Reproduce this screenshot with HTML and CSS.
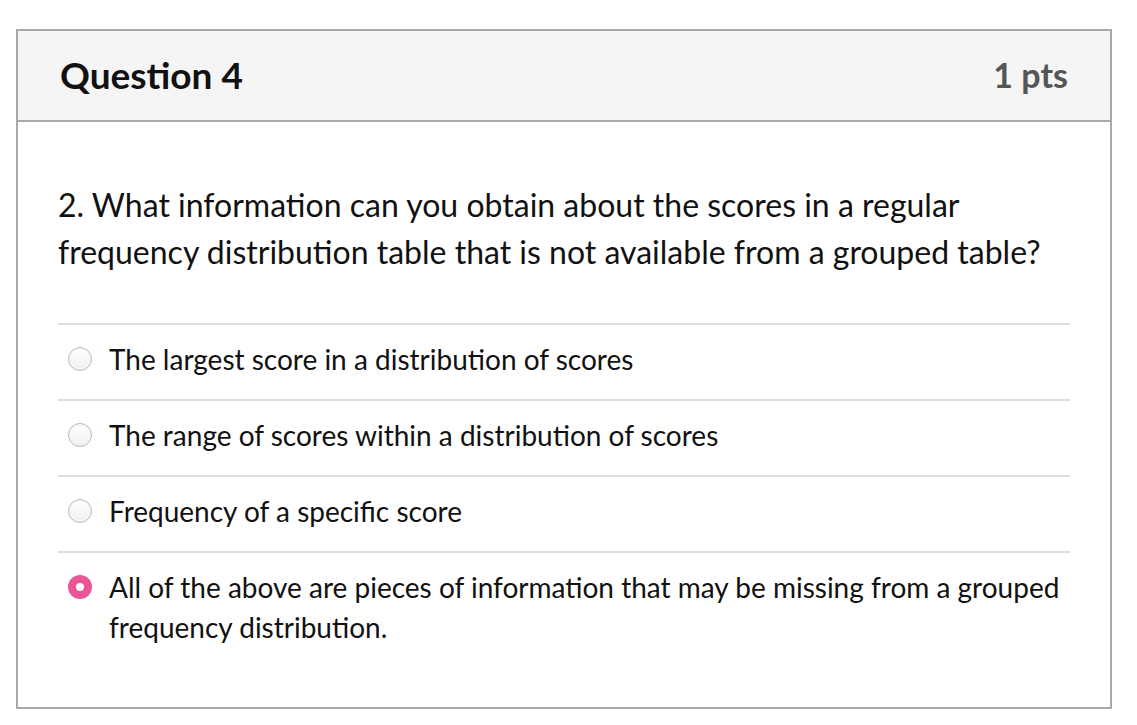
FILE: index.html
```html
<!DOCTYPE html>
<html lang="en">
<head>
<meta charset="utf-8">
<title>Question 4</title>
<link rel="stylesheet" href="styles.css">
</head>
<body>
<div class="page">
  <div class="card">
    <div class="card-header">
      <h2 class="q-title">Question 4</h2>
      <span class="q-points">1 pts</span>
    </div>
    <div class="card-body">
      <p class="q-text">2. What information can you obtain about the scores in a regular frequency distribution table that is not available from a grouped table?</p>
      <div class="answers">
        <label class="answer">
          <span class="radio"></span>
          <span class="answer-text">The largest score in a distribution of scores</span>
        </label>
        <label class="answer">
          <span class="radio"></span>
          <span class="answer-text">The range of scores within a distribution of scores</span>
        </label>
        <label class="answer">
          <span class="radio"></span>
          <span class="answer-text">Frequency of a specific score</span>
        </label>
        <label class="answer">
          <span class="radio radio-selected"></span>
          <span class="answer-text">All of the above are pieces of information that may be missing from a grouped frequency distribution.</span>
        </label>
      </div>
    </div>
  </div>
</div>
</body>
</html>
```
FILE: styles.css
```css
* { box-sizing: border-box; }
html, body { margin: 0; padding: 0; background: #fff; }
body {
  font-family: Lato, "Open Sans", "Liberation Sans", sans-serif;
  color: #111;
}
.page {
  padding: 29px 0 0 16px;
}
.card {
  width: 1096px;
  height: 680px;
  border: 2px solid #a9a9a9;
  background: #fff;
}
.card-header {
  display: flex;
  align-items: center;
  justify-content: space-between;
  height: 91px;
  padding: 0 42px 2px 42px;
  background: #f5f5f5;
  border-bottom: 2px solid #a9a9a9;
}
.q-title {
  margin: 0;
  font-size: 37px;
  font-weight: 700;
  color: #111;
  letter-spacing: 0;
}
.q-points {
  font-size: 34px;
  font-weight: 700;
  color: #555;
}
.card-body {
  padding: 59px 40px 0 40px;
}
.q-text {
  margin: 0;
  font-size: 32px;
  line-height: 47px;
  color: #111;
}
.answers {
  margin-top: 48px;
}
.answer {
  display: flex;
  align-items: flex-start;
  gap: 17px;
  padding: 14px 0 20px 10px;
  border-top: 2px solid #dedede;
}
.radio {
  flex: none;
  width: 24px;
  height: 24px;
  margin-top: 8px;
  border-radius: 50%;
  border: 1px solid #b9b9b9;
  background: linear-gradient(#fdfdfd, #f2f2f2);
  box-shadow: inset 0 1px 1px rgba(0,0,0,0.05);
}
.radio-selected {
  border: 8px solid #ea5597;
  background: #fff;
  box-shadow: none;
}
.answer-text {
  font-size: 28px;
  line-height: 40px;
  color: #111;
}
```
